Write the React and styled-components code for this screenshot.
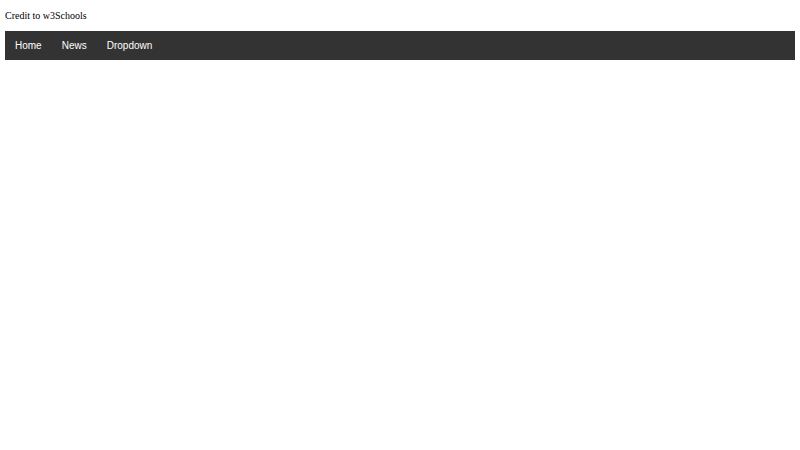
import React, { useState } from "react";
import styled, { createGlobalStyle } from "styled-components";

const GlobalStyle = createGlobalStyle`
  body {
    margin: 5px;
    background: #ffffff;
    font-family: "Liberation Serif", "Times New Roman", serif;
  }
`;

const Credit = styled.p`
  margin: 5px 0 9px;
  font-size: 10px;
  line-height: 11.5px;
  color: #000;
`;

const Navbar = styled.nav`
  display: flex;
  background-color: #333;
  font-family: "Liberation Sans", Arial, sans-serif;
`;

const NavLink = styled.a`
  display: block;
  font-size: 10px;
  line-height: 11.5px;
  color: #ffffff;
  text-align: center;
  padding: 9px 10px 8.5px;
  text-decoration: none;
  cursor: pointer;

  &:hover {
    background-color: #444;
  }
`;

const Dropdown = styled.div`
  position: relative;
`;

const DropButton = styled.button`
  display: block;
  font-size: 10px;
  line-height: 11.5px;
  border: none;
  outline: none;
  color: #ffffff;
  padding: 9px 10px 8.5px;
  background-color: inherit;
  font-family: inherit;
  margin: 0;
  cursor: pointer;
`;

const DropContent = styled.div`
  position: absolute;
  top: 100%;
  left: 0;
  min-width: 100px;
  background-color: #f9f9f9;
  box-shadow: 0 5px 10px rgba(0, 0, 0, 0.2);
  z-index: 1;
`;

const DropItem = styled.a`
  display: block;
  font-size: 10px;
  color: #000;
  padding: 8px 10px;
  text-decoration: none;

  &:hover {
    background-color: #ddd;
  }
`;

const App = () => {
  const [open, setOpen] = useState(false);

  return (
    <>
      <GlobalStyle />
      <Credit>Credit to w3Schools</Credit>
      <Navbar>
        <NavLink>Home</NavLink>
        <NavLink>News</NavLink>
        <Dropdown
          onMouseEnter={() => setOpen(true)}
          onMouseLeave={() => setOpen(false)}
        >
          <DropButton>Dropdown</DropButton>
          {open && (
            <DropContent>
              <DropItem>Link 1</DropItem>
              <DropItem>Link 2</DropItem>
              <DropItem>Link 3</DropItem>
            </DropContent>
          )}
        </Dropdown>
      </Navbar>
    </>
  );
};

export default App;
